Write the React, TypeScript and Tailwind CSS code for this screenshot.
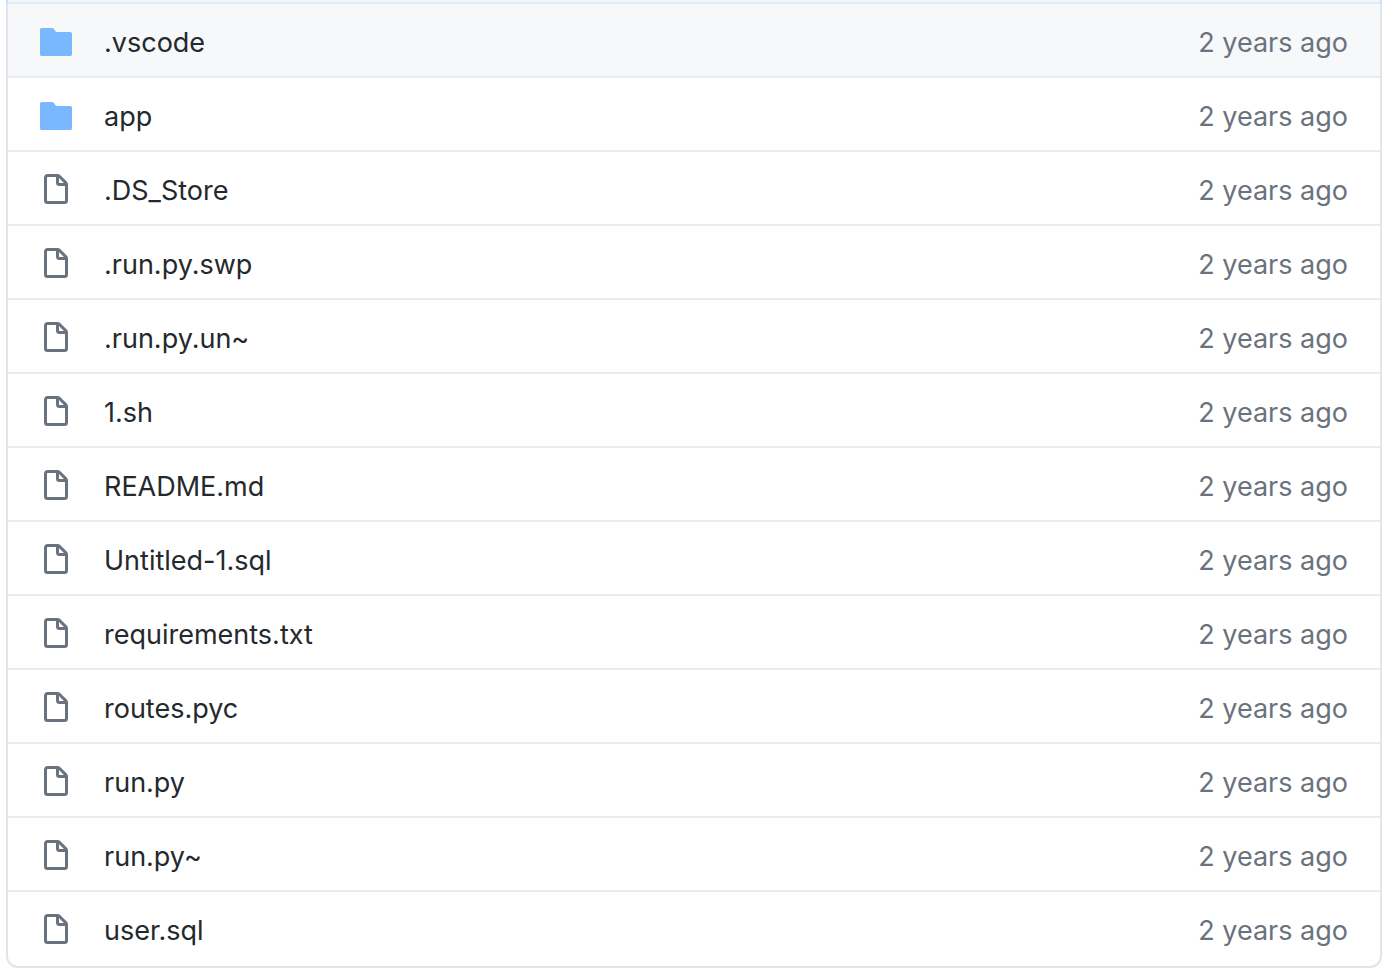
type Entry = { name: string; kind: "dir" | "file"; age: string };

const ENTRIES: Entry[] = [
  { name: ".vscode", kind: "dir", age: "2 years ago" },
  { name: "app", kind: "dir", age: "2 years ago" },
  { name: ".DS_Store", kind: "file", age: "2 years ago" },
  { name: ".run.py.swp", kind: "file", age: "2 years ago" },
  { name: ".run.py.un~", kind: "file", age: "2 years ago" },
  { name: "1.sh", kind: "file", age: "2 years ago" },
  { name: "README.md", kind: "file", age: "2 years ago" },
  { name: "Untitled-1.sql", kind: "file", age: "2 years ago" },
  { name: "requirements.txt", kind: "file", age: "2 years ago" },
  { name: "routes.pyc", kind: "file", age: "2 years ago" },
  { name: "run.py", kind: "file", age: "2 years ago" },
  { name: "run.py~", kind: "file", age: "2 years ago" },
  { name: "user.sql", kind: "file", age: "2 years ago" },
];

function FolderIcon() {
  return (
    <svg viewBox="0 0 16 16" aria-hidden="true" className="size-8 fill-[#79b8ff]">
      <path d="M0.9 1h5.1c.4 0 .72.18.96.5L7.7 2.6c.2.27.45.4.8.4h6.6c.5 0 .9.4.9.9v10.2c0 .5-.4.9-.9.9H.9c-.5 0-.9-.4-.9-.9V1.9C0 1.4.4 1 .9 1z" />
    </svg>
  );
}

function FileIcon() {
  return (
    <svg viewBox="0 0 16 16" aria-hidden="true" className="size-8 fill-[#6a737d]">
      <path
        fillRule="evenodd"
        d="M3.75 1.5a.25.25 0 00-.25.25v11.5c0 .138.112.25.25.25h8.5a.25.25 0 00.25-.25V6H9.75A1.75 1.75 0 018 4.25V1.5H3.75zm5.75.56v2.19c0 .138.112.25.25.25h2.19L9.5 2.06zM2 1.75C2 .784 2.784 0 3.75 0h5.086c.464 0 .909.184 1.237.513l3.414 3.414c.329.328.513.773.513 1.237v8.086A1.75 1.75 0 0112.25 15h-8.5A1.75 1.75 0 012 13.25V1.75z"
      />
    </svg>
  );
}

function EntryRow({ entry }: { entry: Entry }) {
  return (
    <tr className="group first:bg-[#f6f8fa]">
      <td className="h-[74px] w-24 border-t-2 border-[#eaecef] pt-1 pl-8 group-first:h-[72px] group-first:border-t-0">
        {entry.kind === "dir" ? <FolderIcon /> : <FileIcon />}
      </td>
      <td className="border-t-2 border-[#eaecef] pt-1.5 group-first:border-t-0">
        <a href="#" className="text-[#24292e] hover:underline">
          {entry.name}
        </a>
      </td>
      <td className="border-t-2 border-[#eaecef] pt-1.5 pr-8 text-right text-[#6a737d] group-first:border-t-0">
        {entry.age}
      </td>
    </tr>
  );
}

export default function App() {
  return (
    <main className="bg-white pr-[18px] pb-1 pl-1.5 font-['Inter',sans-serif] text-[27px] leading-10">
      {/* bottom edge of the commit bar */}
      <div className="border-x-2 border-[#c8e1ff] bg-[#f1f8ff] pt-0.5">
        <div className="h-0.5 bg-[#e6ebf1]" />
      </div>
      <div className="overflow-hidden rounded-b-xl border-x-2 border-b-2 border-[#e1e4e8] pb-0.5">
        <table className="w-full border-separate border-spacing-0">
          <tbody>
            {ENTRIES.map((entry) => (
              <EntryRow key={entry.name} entry={entry} />
            ))}
          </tbody>
        </table>
      </div>
    </main>
  );
}
